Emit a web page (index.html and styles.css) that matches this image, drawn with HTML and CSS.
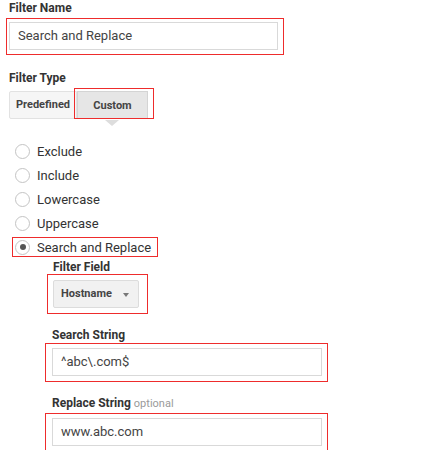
FILE: index.html
```html
<!DOCTYPE html>
<html>
<head>
<meta charset="utf-8">
<link rel="stylesheet" href="styles.css">
</head>
<body>
<div class="form">
  <div class="label">Filter Name</div>
  <div class="hl hl-name"><div class="input input-name">Search and Replace</div></div>

  <div class="label label-type">Filter Type</div>
  <div class="seg">
    <div class="btn btn-pre">Predefined</div>
    <div class="hl hl-custom"><div class="btn btn-custom">Custom<span class="pointer"></span></div></div>
  </div>

  <ul class="radios">
    <li class="radio"><span class="circle"></span><span>Exclude</span></li>
    <li class="radio"><span class="circle"></span><span>Include</span></li>
    <li class="radio"><span class="circle"></span><span>Lowercase</span></li>
    <li class="radio"><span class="circle"></span><span>Uppercase</span></li>
    <li class="radio"><span class="hl hl-radio"><span class="circle checked"></span><span>Search and Replace</span></span></li>
  </ul>

  <div class="sub">
    <div class="label label-sub">Filter Field</div>
    <div class="hl hl-select"><div class="select">Hostname<span class="caret"></span></div></div>

    <div class="label label-sub label-gap">Search String</div>
    <div class="hl hl-field"><div class="input input-sub">^abc\.com$</div></div>

    <div class="label label-sub label-gap">Replace String <span class="optional">optional</span></div>
    <div class="hl hl-field hl-last"><div class="input input-sub">www.abc.com</div></div>
  </div>
</div>
</body>
</html>
```

FILE: styles.css
```css
html, body {
  margin: 0;
  padding: 0;
  background: #ffffff;
}
body {
  font-family: Roboto, "Liberation Sans", Arial, sans-serif;
  color: #333333;
}
.form {
  padding: 1px 0 0 6px;
}
.label {
  font-size: 12px;
  font-weight: 700;
  line-height: 14px;
  color: #333333;
  margin-left: 3px;
}
.hl {
  border: 1px solid #ee2c2c;
}
.hl-name {
  display: inline-block;
  margin-top: 3px;
  padding: 3px 5px 4px 2px;
  vertical-align: top;
}
.input {
  box-sizing: border-box;
  height: 28px;
  border: 1px solid #d9d9d9;
  background: #ffffff;
  padding-left: 8px;
  font-size: 13px;
  line-height: 26px;
  color: #444444;
}
.input-name {
  width: 269px;
}
.label-type {
  margin-top: 16px;
}
.seg {
  display: flex;
  align-items: flex-start;
  margin-top: 3px;
}
.btn {
  box-sizing: border-box;
  font-size: 11px;
  font-weight: 700;
  color: #444444;
  text-align: center;
}
.btn-pre {
  margin-left: 3px;
  margin-top: 3px;
  width: 68px;
  height: 28px;
  line-height: 26px;
  background: #f6f6f6;
  border: 1px solid #e2e2e2;
  border-radius: 2px 0 0 2px;
}
.hl-custom {
  margin-left: -3px;
  padding: 2px 5px 0 2px;
  position: relative;
}
.btn-custom {
  position: relative;
  width: 71px;
  height: 27px;
  line-height: 27px;
  background: #e6e6e6;
  border: 1px solid #d4d4d4;
  border-bottom: none;
}
.pointer {
  position: absolute;
  left: 27px;
  top: 28px;
  width: 0;
  height: 0;
  border-left: 7px solid transparent;
  border-right: 7px solid transparent;
  border-top: 6px solid #dddddd;
}
.radios {
  list-style: none;
  margin: 20px 0 0 0;
  padding: 0;
}
.radio {
  display: flex;
  align-items: center;
  height: 24px;
  padding-left: 9px;
  font-size: 13px;
  color: #333333;
}
.circle {
  box-sizing: border-box;
  width: 15px;
  height: 15px;
  border: 1px solid #c4c4c4;
  border-radius: 50%;
  margin-right: 7px;
  background: #ffffff;
  display: flex;
  align-items: center;
  justify-content: center;
  flex: none;
}
.circle.checked::after {
  content: "";
  width: 6px;
  height: 6px;
  border-radius: 50%;
  background: #555555;
}
.hl-radio {
  display: flex;
  align-items: center;
  height: 18px;
  margin-left: -3px;
  padding: 0 6px 0 2px;
}
.sub {
  margin-left: 41px;
  padding-top: 1px;
}
.label-sub {
  margin-left: 6px;
}
.label-gap {
  margin-top: 14px;
  margin-left: 5px;
}
.hl-select {
  display: inline-block;
  padding: 5px 8px 5px 5px;
  vertical-align: top;
}
.select {
  box-sizing: border-box;
  position: relative;
  width: 86px;
  height: 28px;
  padding-left: 7px;
  background: #f1f1f1;
  border: 1px solid #dcdcdc;
  border-radius: 2px;
  font-size: 11px;
  font-weight: 700;
  line-height: 26px;
  color: #444444;
}
.caret {
  position: absolute;
  right: 9px;
  top: 12px;
  width: 0;
  height: 0;
  border-left: 3.5px solid transparent;
  border-right: 3.5px solid transparent;
  border-top: 4px solid #777777;
}
.hl-field {
  display: inline-block;
  vertical-align: top;
  margin-top: 1px;
  margin-left: -2px;
  padding: 4px 5px 5px 6px;
}
.hl-last {
  margin-top: 2px;
  padding-bottom: 4px;
}
.input-sub {
  width: 270px;
}
.optional {
  font-size: 11px;
  font-weight: 400;
  color: #9a9a9a;
}
```
